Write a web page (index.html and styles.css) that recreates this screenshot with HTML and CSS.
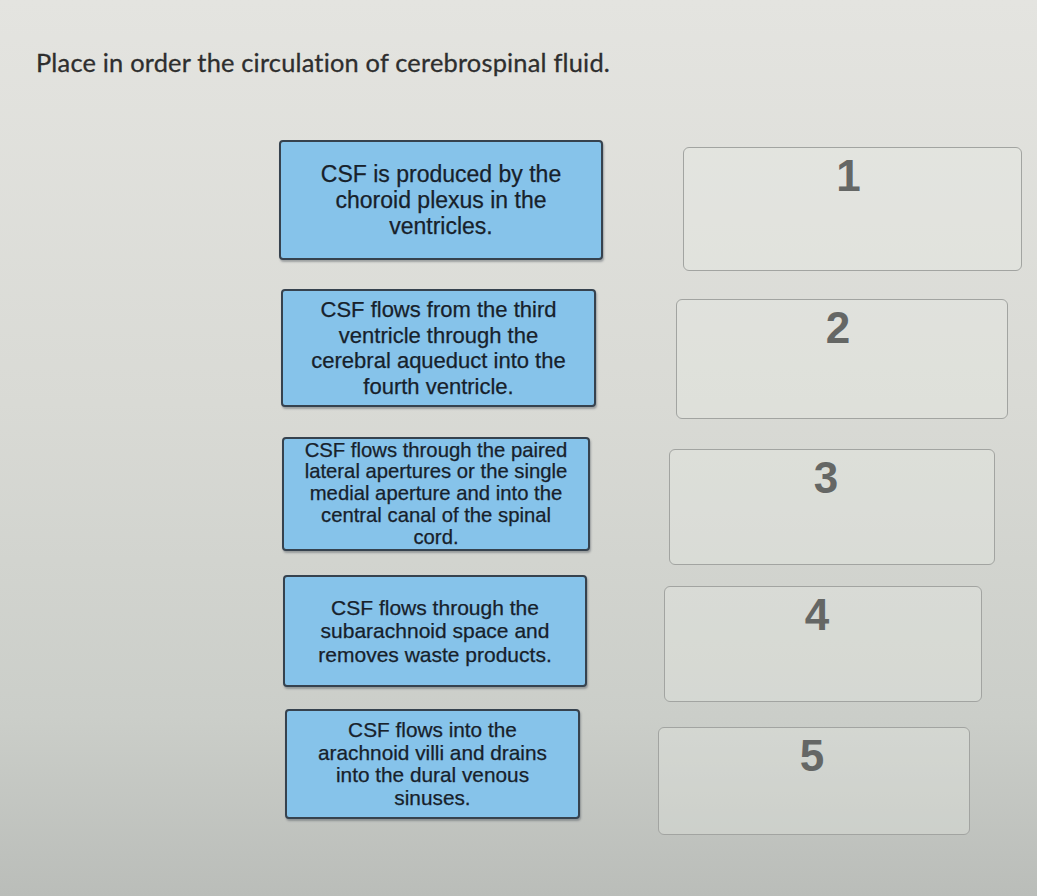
FILE: index.html
```html
<!DOCTYPE html>
<html lang="en">
  <head>
    <meta charset="UTF-8" />
    <meta name="viewport" content="width=device-width, initial-scale=1.0" />
    <title>Ordering Question</title>
    <link rel="stylesheet" href="styles.css">
  </head>
  <body>
    <!-- ========== QUESTION ========== -->
    <div class="question">
      <p class="prompt">Place in order the circulation of cerebrospinal fluid.</p>

      <!-- ========== DRAG ITEMS + DROP SLOTS ========== -->
      <div class="order-list">
        <div class="order-row row-1">
          <div class="drag-card">CSF is produced by the<br>choroid plexus in the<br>ventricles.</div>
          <div class="drop-slot"><span class="slot-num">1</span></div>
        </div>
        <div class="order-row row-2">
          <div class="drag-card">CSF flows from the third<br>ventricle through the<br>cerebral aqueduct into the<br>fourth ventricle.</div>
          <div class="drop-slot"><span class="slot-num">2</span></div>
        </div>
        <div class="order-row row-3">
          <div class="drag-card">CSF flows through the paired<br>lateral apertures or the single<br>medial aperture and into the<br>central canal of the spinal<br>cord.</div>
          <div class="drop-slot"><span class="slot-num">3</span></div>
        </div>
        <div class="order-row row-4">
          <div class="drag-card">CSF flows through the<br>subarachnoid space and<br>removes waste products.</div>
          <div class="drop-slot"><span class="slot-num">4</span></div>
        </div>
        <div class="order-row row-5">
          <div class="drag-card">CSF flows into the<br>arachnoid villi and drains<br>into the dural venous<br>sinuses.</div>
          <div class="drop-slot"><span class="slot-num">5</span></div>
        </div>
      </div>
    </div>
  </body>
</html>
```

FILE: styles.css
```css
* {
  margin: 0;
  padding: 0;
  box-sizing: border-box;
}

html,
body {
  height: 100%;
}

body {
  font-family: "Liberation Sans", Arial, sans-serif;
  background: linear-gradient(180deg, #e4e4e0 0%, #d9dad5 45%, #cbcec9 80%, #babdb9 100%);
  overflow: hidden;
}

.question {
  padding: 47px 0 0 36px;
}

.prompt {
  font-family: Lato, "Open Sans", sans-serif;
  font-size: 25.4px;
  color: #2e2e2e;
  letter-spacing: 0.2px;
  -webkit-text-stroke: 0.3px #2e2e2e;
}

/* ========== ROWS ========== */
.order-list {
  display: flex;
  flex-direction: column;
  margin-top: 63px;
}

/* row height follows the card; the slot hangs a little lower */
.order-row {
  display: flex;
  align-items: flex-start;
  height: var(--card-h);
  margin-left: var(--shift);
  margin-bottom: var(--after);
  gap: var(--gap);
}

.row-1 { --shift: 243px; --after: 29px; --gap: 80px; --card-w: 324px; --card-h: 120px; --slot-w: 339px; --slot-h: 124px; --drop: 7px; --fs: 23px; --lh: 26px; --num-x: -4px; }
.row-2 { --shift: 245px; --after: 30px; --gap: 80px; --card-w: 315px; --card-h: 118px; --slot-w: 332px; --slot-h: 120px; --drop: 10px; --fs: 22px; --lh: 25.5px; --num-x: -4px; }
.row-3 { --shift: 246px; --after: 24px; --gap: 79px; --card-w: 308px; --card-h: 114px; --slot-w: 326px; --slot-h: 116px; --drop: 12px; --fs: 20.3px; --lh: 21.8px; --num-x: -6px; }
.row-4 { --shift: 247px; --after: 22px; --gap: 77px; --card-w: 304px; --card-h: 112px; --slot-w: 318px; --slot-h: 116px; --drop: 11px; --fs: 21px; --lh: 23.5px; --num-x: -6px; }
.row-5 { --shift: 249px; --after: 0px; --gap: 78px; --card-w: 295px; --card-h: 110px; --slot-w: 312px; --slot-h: 108px; --drop: 18px; --fs: 20.8px; --lh: 22.5px; --num-x: -2px; }

/* ========== DRAG CARD ========== */
.drag-card {
  flex-shrink: 0;
  width: var(--card-w);
  height: var(--card-h);
  display: flex;
  align-items: center;
  justify-content: center;
  text-align: center;
  background-color: #86c3ea;
  border: 2px solid #36424e;
  border-radius: 4px;
  box-shadow: 1px 2px 2px rgba(40, 50, 60, 0.35);
  color: #17212b;
  font-size: var(--fs);
  line-height: var(--lh);
  white-space: nowrap;
  -webkit-text-stroke: 0.25px #17212b;
}

/* ========== DROP SLOT ========== */
.drop-slot {
  flex-shrink: 0;
  width: var(--slot-w);
  height: var(--slot-h);
  margin-top: var(--drop);
  border: 1.5px solid #a2a4a1;
  border-radius: 6px;
  background-color: rgba(236, 237, 233, 0.3);
  display: flex;
  justify-content: center;
  padding-top: 6px;
}

.slot-num {
  margin-left: calc(var(--num-x) * 2);
  font-size: 44px;
  font-weight: bold;
  color: #656765;
  line-height: 1;
}
```
